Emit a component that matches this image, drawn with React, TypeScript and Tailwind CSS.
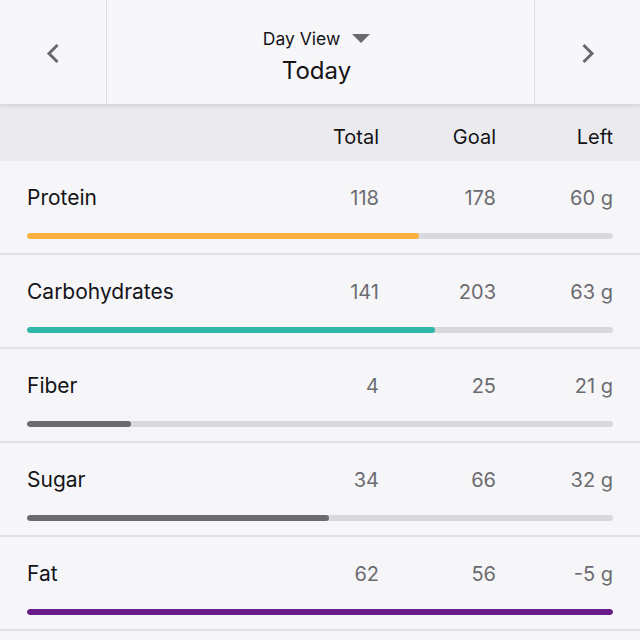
interface Macro {
  name: string;
  total: number;
  goal: number;
  left: number;
  pct: number;
  color: string;
}

const macros: Macro[] = [
  { name: "Protein", total: 118, goal: 178, left: 60, pct: 66.9, color: "bg-[#fcb040]" },
  { name: "Carbohydrates", total: 141, goal: 203, left: 63, pct: 69.6, color: "bg-[#2fb7aa]" },
  { name: "Fiber", total: 4, goal: 25, left: 21, pct: 17.7, color: "bg-[#6b6b6e]" },
  { name: "Sugar", total: 34, goal: 66, left: 32, pct: 51.5, color: "bg-[#6b6b6e]" },
  { name: "Fat", total: 62, goal: 56, left: -5, pct: 100, color: "bg-[#6a1b8c]" },
];

const Chevron = ({ dir }: { dir: "left" | "right" }) => (
  <svg width="14" height="21" viewBox="0 0 14 21" fill="none">
    <path
      d={dir === "left" ? "M11.5 2 L3 10.5 L11.5 19" : "M2.5 2 L11 10.5 L2.5 19"}
      stroke="currentColor"
      strokeWidth="3"
    />
  </svg>
);

export default function App() {
  return (
    <div className="min-h-[640px] w-[640px] bg-[#f6f6f9] font-['Inter',sans-serif] text-[#141417]">
      {/* day switcher */}
      <div className="relative z-10 flex h-[105px] border-b border-[#d9d9dd] bg-[#f7f7f9] shadow-[0_2px_4px_rgba(0,0,0,0.08)]">
        <button className="flex w-[107px] items-center justify-center border-r border-[#dedee2] pt-[2px] text-[#6a6a6e]">
          <Chevron dir="left" />
        </button>
        <div className="flex flex-1 flex-col items-center justify-center pt-[9px] pr-[8px]">
          <div className="flex items-center gap-[12px] text-[17.5px] leading-[22px]">
            <span>Day View</span>
            <svg width="18" height="10" viewBox="0 0 18 10" className="text-[#6a6a6e]">
              <path d="M0 0h18L9 9z" fill="currentColor" />
            </svg>
          </div>
          <div className="mt-[6px] text-[24px] leading-[30px]">Today</div>
        </div>
        <button className="flex w-[106px] items-center justify-center border-l border-[#dedee2] pt-[2px] text-[#6a6a6e]">
          <Chevron dir="right" />
        </button>
      </div>

      {/* column headings */}
      <div className="flex h-[56px] items-center bg-[#ebebef] px-[27px] pt-[7px] text-[20px]">
        <div className="flex-1" />
        <div className="w-[117px] text-right">Total</div>
        <div className="w-[117px] text-right">Goal</div>
        <div className="w-[117px] text-right">Left</div>
      </div>

      {macros.map((m) => (
        <div key={m.name} className="border-b-2 border-[#e2e2e5] px-[27px] pt-[25px] pb-[14px]">
          <div className="flex h-[24px] items-center text-[20px]">
            <div className="flex-1 text-[21px]">{m.name}</div>
            <div className="w-[117px] text-right text-[#6b6b70]">{m.total}</div>
            <div className="w-[117px] text-right text-[#6b6b70]">{m.goal}</div>
            <div className="w-[117px] text-right text-[#6b6b70]">{m.left} g</div>
          </div>
          <div className="mt-[23px] h-[6px] w-full overflow-hidden rounded-full bg-[#d9d9dc]">
            <div className={`h-full rounded-full ${m.color}`} style={{ width: `${m.pct}%` }} />
          </div>
        </div>
      ))}
    </div>
  );
}
